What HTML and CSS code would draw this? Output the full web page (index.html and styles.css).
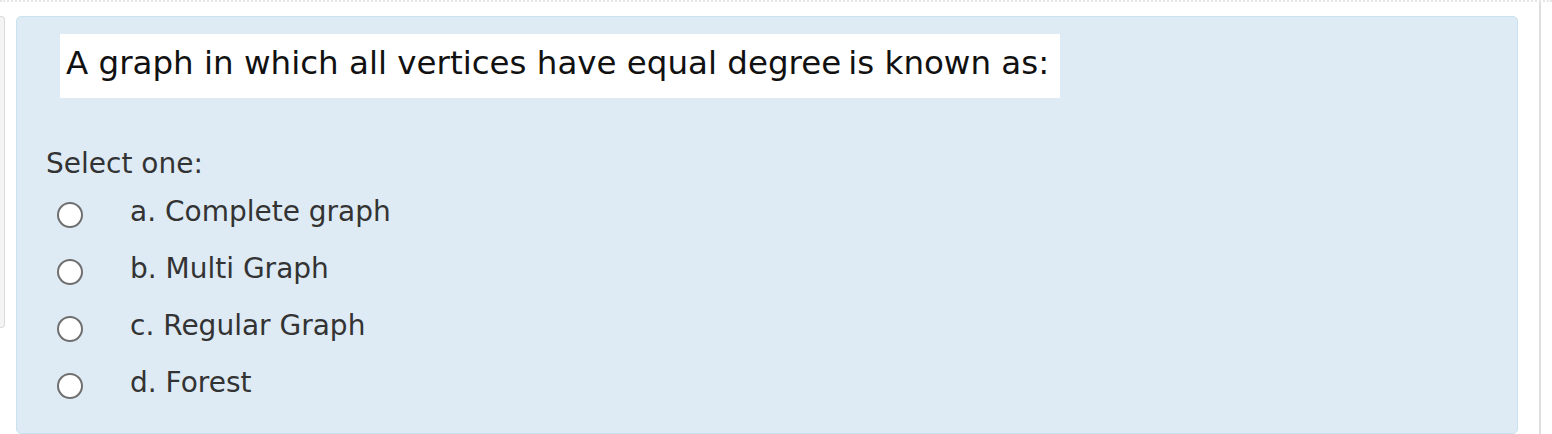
FILE: index.html
```html
<!DOCTYPE html>
<html>
<head>
<meta charset="utf-8">
<link rel="stylesheet" href="styles.css">
</head>
<body>
<div class="page">
  <div class="stub"></div>
  <div class="formulation">
    <div class="qtext"><span>A graph in which all vertices have equal degree</span><span class="tight">is known as:</span></div>
    <div class="ablock">
      <div class="prompt">Select one:</div>
      <div class="answers">
        <label class="opt"><span class="radio"></span><span class="lbl">a. Complete graph</span></label>
        <label class="opt"><span class="radio"></span><span class="lbl">b. Multi Graph</span></label>
        <label class="opt"><span class="radio"></span><span class="lbl">c. Regular Graph</span></label>
        <label class="opt"><span class="radio"></span><span class="lbl">d. Forest</span></label>
      </div>
    </div>
  </div>
  <div class="rule"></div>
</div>
</body>
</html>
```
FILE: styles.css
```css
html, body {
  margin: 0;
  padding: 0;
  background: #ffffff;
}
.page {
  display: flex;
  align-items: flex-start;
  height: 434px;
  border-top: 2px dotted #e6e6e6;
  box-sizing: border-box;
  overflow: hidden;
  font-family: "DejaVu Sans", Verdana, sans-serif;
}
.stub {
  width: 5px;
  height: 312px;
  margin-top: 14px;
  box-sizing: border-box;
  background: #f4f4f4;
  border: 1px solid #d9d9d9;
  border-left: none;
  border-radius: 0 4px 4px 0;
  flex: none;
}
.formulation {
  margin-top: 14px;
  margin-left: 11px;
  width: 1502px;
  height: 418px;
  box-sizing: border-box;
  flex: none;
  background: #deebf5;
  border: 1px solid #c8e3ee;
  border-radius: 5px;
  padding: 17px 0 0 29px;
}
.qtext {
  margin-left: 14px;
  width: 1000px;
  height: 64px;
  box-sizing: border-box;
  background: #ffffff;
  padding: 0 0 6px 6px;
  display: flex;
  align-items: center;
  gap: 7px;
  font-size: 32.5px;
  color: #111;
  white-space: nowrap;
}
.ablock {
  margin-top: 48px;
  color: #333333;
}
.prompt {
  font-size: 28px;
  line-height: 36px;
}
.answers {
  display: flex;
  flex-direction: column;
  margin-top: 4px;
}
.opt {
  display: flex;
  align-items: center;
  height: 57px;
  font-size: 28px;
}
.radio {
  width: 26px;
  height: 26px;
  box-sizing: border-box;
  border: 2px solid #6f6f6f;
  border-radius: 50%;
  background: #fff;
  margin-left: 11px;
  flex: none;
}
.lbl {
  margin-left: 47px;
  padding-bottom: 6px;
}
.rule {
  margin-left: 21px;
  width: 2px;
  height: 434px;
  background: #dedede;
  flex: none;
}
```
